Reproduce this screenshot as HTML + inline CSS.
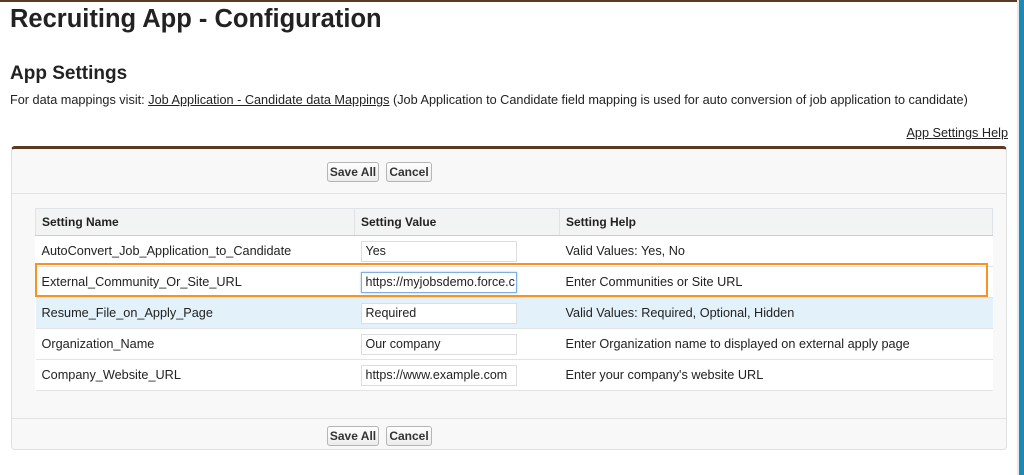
<!DOCTYPE html>
<html><head><style>
body{margin:0;width:1024px;height:475px;background:#fff;font-family:"Liberation Sans",Arial,sans-serif;color:#222;position:relative;overflow:hidden}
.a{position:absolute}
h1{position:absolute;left:10px;top:5px;margin:0;font-size:25.5px;font-weight:bold;color:#222}
h2{position:absolute;left:10px;top:63px;margin:0;font-size:19px;font-weight:bold;color:#222}
u{color:#222}
.panel{position:absolute;left:11px;top:146px;width:996px;height:304px;background:#f8f8f8;border-top:3px solid #5a3a22;border-radius:4px;border-left:1px solid #e0e0e0;border-right:1px solid #e0e0e0;border-bottom:1px solid #e0e0e0;box-sizing:border-box}
.btn{position:absolute;height:20px;border:1px solid #b5b5b5;border-radius:3px;background:linear-gradient(#fff,#ececec);font-size:12px;font-weight:bold;line-height:19px;text-align:center;box-sizing:border-box;color:#333}
table{position:absolute;left:35px;top:208px;width:958px;border-collapse:collapse;font-size:12.7px;background:#fff}
th{background:#f2f3f3;text-align:left;font-size:12px;height:26px;padding:0 6px;border:1px solid #e0e3e5;border-bottom:1px solid #ccc}
td{height:30px;padding:0 6px;border-bottom:1px solid #e3e3e3;line-height:14px}
.in{width:156px;height:21px;border:1px solid #ddd;box-sizing:border-box;font-size:12.5px;line-height:19px;padding-left:4px;background:#fff;overflow:hidden;white-space:nowrap}
</style></head><body>
<div class="a" style="left:0;top:0;width:1017px;height:2px;background:#5a3a22"></div>
<div class="a" style="left:1017px;top:0;width:2px;height:475px;background:#e8e8e8"></div>
<div class="a" style="left:1019px;top:0;width:5px;height:475px;background:#1b8ab6"></div>
<h1>Recruiting App - Configuration</h1>
<h2>App Settings</h2>
<div class="a" style="left:10px;top:93px;font-size:12.7px">For data mappings visit: <u>Job Application - Candidate data Mappings</u> (Job Application to Candidate field mapping is used for auto conversion of job application to candidate)</div>
<div class="a" style="right:16px;top:126px;font-size:12.7px"><u>App Settings Help</u></div>
<div class="panel"></div>
<div class="a" style="left:12px;top:193px;width:994px;height:1px;background:#e3e3e3"></div>
<div class="a" style="left:12px;top:418px;width:994px;height:1px;background:#e3e3e3"></div>
<div class="btn" style="left:327px;top:162px;width:52px">Save All</div>
<div class="btn" style="left:386px;top:162px;width:46px">Cancel</div>
<div class="btn" style="left:327px;top:426px;width:52px">Save All</div>
<div class="btn" style="left:386px;top:426px;width:46px">Cancel</div>
<table>
<tr><th style="width:306px">Setting Name</th><th style="width:192px">Setting Value</th><th>Setting Help</th></tr>
<tr><td>AutoConvert_Job_Application_to_Candidate</td><td><div class="in">Yes</div></td><td>Valid Values: Yes, No</td></tr>
<tr><td>External_Community_Or_Site_URL</td><td><div class="in" style="border:1px solid #7fb0e0;box-shadow:0 0 2px #9cc4ee">https://myjobsdemo.force.c</div></td><td>Enter Communities or Site URL</td></tr>
<tr style="background:#e3f1fb"><td>Resume_File_on_Apply_Page</td><td><div class="in">Required</div></td><td>Valid Values: Required, Optional, Hidden</td></tr>
<tr><td>Organization_Name</td><td><div class="in">Our company</div></td><td>Enter Organization name to displayed on external apply page</td></tr>
<tr><td>Company_Website_URL</td><td><div class="in">https://www.example.com</div></td><td>Enter your company's website URL</td></tr>
</table>
<div class="a" style="left:35px;top:263px;width:953px;height:34px;border:2px solid #f7931e;box-sizing:border-box"></div>
</body></html>
